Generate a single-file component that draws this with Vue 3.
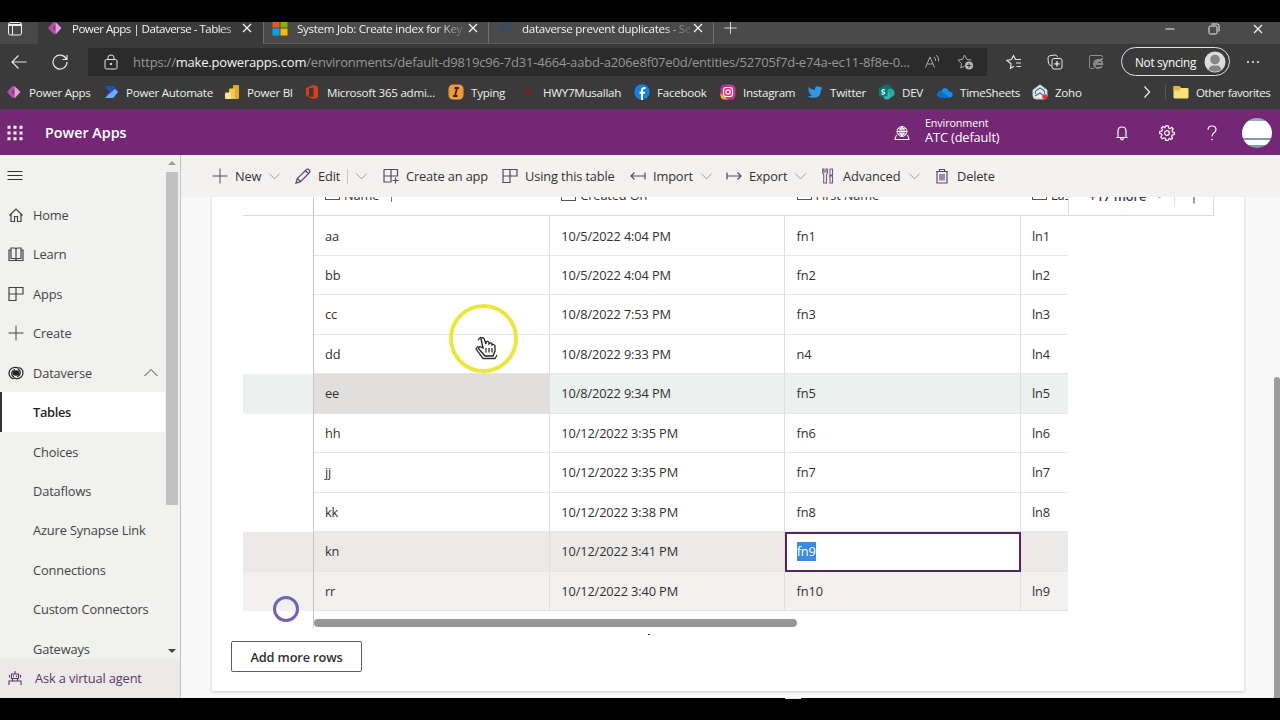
<template>
  <div class="screen">
    <!-- browser tabs -->
    <div class="tab-strip">
      <div class="tab-actions">
        <svg viewBox="0 0 16 16" class="icon" v-html="icons.tabActions"></svg>
      </div>
      <div v-for="(tab, index) in tabs" :key="tab.title" class="tab" :class="{ active: index === 0 }">
        <svg viewBox="0 0 16 16" class="icon" v-html="icons[tab.icon]"></svg>
        <span class="tab-title">{{ tab.title }}</span>
        <svg viewBox="0 0 16 16" class="icon" v-html="icons.close"></svg>
      </div>
      <svg viewBox="0 0 16 16" class="icon new-tab" v-html="icons.plus"></svg>
      <div class="window-buttons">
        <svg viewBox="0 0 16 16" class="icon" v-html="icons.minimize"></svg>
        <svg viewBox="0 0 16 16" class="icon" v-html="icons.restore"></svg>
        <svg viewBox="0 0 16 16" class="icon" v-html="icons.close"></svg>
      </div>
    </div>

    <!-- address bar -->
    <div class="nav-bar">
      <svg viewBox="0 0 16 16" class="icon nav-icon back" v-html="icons.back"></svg>
      <svg viewBox="0 0 16 16" class="icon nav-icon refresh" v-html="icons.refresh"></svg>
      <div class="url-bar">
        <svg viewBox="0 0 16 16" class="icon lock" v-html="icons.lock"></svg>
        <span class="url">https://<b>make.powerapps.com</b>/environments/default-d9819c96-7d31-4664-aabd-a206e8f07e0d/entities/52705f7d-e74a-ec11-8f8e-0...</span>
        <svg viewBox="0 0 16 16" class="icon dim read" v-html="icons.readAloud"></svg>
        <svg viewBox="0 0 16 16" class="icon dim" v-html="icons.starAdd"></svg>
      </div>
      <div class="nav-tools">
        <svg viewBox="0 0 16 16" class="icon" v-html="icons.favorites"></svg>
        <svg viewBox="0 0 16 16" class="icon" v-html="icons.collections"></svg>
        <svg viewBox="0 0 16 16" class="icon faint" v-html="icons.ie"></svg>
      </div>
      <div class="profile">
        <span>Not syncing</span>
        <svg viewBox="0 0 22 22" class="profile-pic" v-html="icons.person"></svg>
      </div>
      <svg viewBox="0 0 16 16" class="icon more" v-html="icons.dots"></svg>
    </div>

    <!-- favorites bar -->
    <div class="favorites">
      <div v-for="fav in favorites" :key="fav.label" class="favorite" :style="{ width: fav.width + 'px' }">
        <svg viewBox="0 0 16 16" class="icon" v-html="icons[fav.icon]"></svg>
        <span>{{ fav.label }}</span>
      </div>
      <svg viewBox="0 0 16 16" class="icon overflow" v-html="icons.chevronRight"></svg>
      <div class="favorite other">
        <svg viewBox="0 0 16 16" class="icon" v-html="icons.folder"></svg>
        <span>Other favorites</span>
      </div>
    </div>

    <!-- Power Apps header -->
    <header class="app-header">
      <svg viewBox="0 0 16 16" class="icon" v-html="icons.waffle"></svg>
      <span class="app-title">Power Apps</span>
      <svg viewBox="0 0 16 16" class="icon env-icon" v-html="icons.environment"></svg>
      <div class="environment">
        <span class="env-label">Environment</span>
        <span class="env-name">ATC (default)</span>
      </div>
      <div class="header-icons">
        <svg viewBox="0 0 16 16" class="icon" v-html="icons.bell"></svg>
        <svg viewBox="0 0 16 16" class="icon" v-html="icons.gear"></svg>
        <svg viewBox="0 0 16 16" class="icon" v-html="icons.help"></svg>
      </div>
      <div class="avatar"></div>
    </header>

    <div class="body">
      <aside class="sidebar">
        <div class="sidebar-scroll">
          <div class="nav-list">
            <div class="hamburger">
              <svg viewBox="0 0 16 16" class="icon" v-html="icons.menu"></svg>
            </div>
            <div
              v-for="item in navItems"
              :key="item.label"
              class="nav-item"
              :class="{ selected: item.label === selectedNav }"
            >
              <svg viewBox="0 0 16 16" class="icon" v-html="item.icon ? icons[item.icon] : ''"></svg>
              <span>{{ item.label }}</span>
              <svg v-if="item.open" viewBox="0 0 16 16" class="icon expand" v-html="icons.chevronUp"></svg>
            </div>
          </div>
          <div class="scrollbar">
            <span class="arrow up"></span>
            <span class="thumb"></span>
            <span class="arrow down"></span>
          </div>
        </div>
        <div class="agent">
          <svg viewBox="0 0 16 16" class="icon" v-html="icons.bot"></svg>
          <span>Ask a virtual agent</span>
        </div>
      </aside>

      <main class="main">
        <div class="commands">
          <div v-for="cmd in commands" :key="cmd.label" class="command" :style="{ width: cmd.width + 'px' }">
            <svg viewBox="0 0 16 16" class="icon" v-html="icons[cmd.icon]"></svg>
            <span :style="{ width: cmd.textWidth + 'px' }">{{ cmd.label }}</span>
            <i v-if="cmd.split" class="split"></i>
            <svg v-if="cmd.menu" viewBox="0 0 16 16" class="icon chevron" v-html="icons.chevronDown"></svg>
          </div>
        </div>

        <section class="card">
          <div class="grid-area">
            <div class="grid">
              <div class="row head">
                <div class="gutter"></div>
                <div class="cell"><i class="field"></i>Name<b class="sort"></b></div>
                <div class="cell"><i class="field date"></i>Created On</div>
                <div class="cell"><i class="field"></i>First Name</div>
                <div class="cell last"><i class="field"></i>Las</div>
              </div>
              <div v-for="row in rows" :key="row.name" class="row" :class="row.state">
                <div class="gutter"></div>
                <div class="cell">{{ row.name }}</div>
                <div class="cell">{{ row.created }}</div>
                <div class="cell" :class="{ editing: row.editing }">
                  <span>{{ row.first }}</span>
                </div>
                <div class="cell last">{{ row.last }}</div>
              </div>
              <div class="grid-foot"><span class="h-thumb"></span></div>
            </div>
            <div class="more-columns">
              <span>+17 more</span>
              <svg viewBox="0 0 16 16" class="icon small" v-html="icons.chevronDown"></svg>
              <i class="divider"></i>
              <svg viewBox="0 0 16 16" class="icon add" v-html="icons.plus"></svg>
            </div>
          </div>
          <button class="add-rows">Add more rows</button>
        </section>

        <span class="page-thumb"></span>
      </main>
    </div>

    <!-- pointer, click ring and stray marks lie over the page -->
    <span class="spotlight"></span>
    <svg class="pointer" viewBox="0 0 24 28">
      <path d="M6 3 L3 6 M3 12 L1 15 L8 24.500 H20 L22 21" fill="none" stroke="#333" stroke-width="1.300" />
      <path
        d="M8 14 L6 5 Q7 2.500 9 4.500 L11 10 V8 Q13 6.500 14 8.500 V10 Q16 8 17 9.500 V11 Q19 9.500 20 12 L20 17 L18 22 H10 L3.500 14.500 Q4 12 6 13 Z"
        fill="#fff"
        stroke="#222"
        stroke-width="1.300"
      />
      <path d="M11 14 V18.500 M14 14 V18.500 M17 14 V18.500" stroke="#222" stroke-width="1.200" />
    </svg>
    <span class="busy-ring"></span>
    <span class="speck"></span>
    <span class="edge-mark"></span>
  </div>
</template>

<script setup>
import { ref } from 'vue'

const selectedNav = ref('Tables')

const tabs = [
  { title: 'Power Apps | Dataverse - Tables', icon: 'powerApps' },
  { title: 'System Job: Create index for Key', icon: 'microsoft' },
  { title: 'dataverse prevent duplicates - Se', icon: 'search' },
]

const favorites = [
  { label: 'Power Apps', icon: 'powerApps', width: 97 },
  { label: 'Power Automate', icon: 'automate', width: 121 },
  { label: 'Power BI', icon: 'powerBi', width: 80 },
  { label: 'Microsoft 365 admi...', icon: 'office', width: 144 },
  { label: 'Typing', icon: 'typing', width: 72 },
  { label: 'HWY7Musallah', icon: 'musallah', width: 114 },
  { label: 'Facebook', icon: 'facebook', width: 86 },
  { label: 'Instagram', icon: 'instagram', width: 87 },
  { label: 'Twitter', icon: 'twitter', width: 72 },
  { label: 'DEV', icon: 'sharepoint', width: 58 },
  { label: 'TimeSheets', icon: 'onedrive', width: 95 },
  { label: 'Zoho', icon: 'zoho', width: 106 },
]

const navItems = [
  { label: 'Home', icon: 'home' },
  { label: 'Learn', icon: 'book' },
  { label: 'Apps', icon: 'apps' },
  { label: 'Create', icon: 'plus' },
  { label: 'Dataverse', icon: 'dataverse', open: true },
  { label: 'Tables' },
  { label: 'Choices' },
  { label: 'Dataflows' },
  { label: 'Azure Synapse Link' },
  { label: 'Connections' },
  { label: 'Custom Connectors' },
  { label: 'Gateways' },
]

const commands = [
  { label: 'New', icon: 'plus', width: 83, textWidth: 26, menu: true },
  { label: 'Edit', icon: 'pencil', width: 88, textWidth: 22, split: true, menu: true },
  { label: 'Create an app', icon: 'appsAdd', width: 119, textWidth: 82 },
  { label: 'Using this table', icon: 'apps', width: 128, textWidth: 91 },
  { label: 'Import', icon: 'importArrow', width: 96, textWidth: 40, menu: true },
  { label: 'Export', icon: 'exportArrow', width: 94, textWidth: 38, menu: true },
  { label: 'Advanced', icon: 'tools', width: 114, textWidth: 58, menu: true },
  { label: 'Delete', icon: 'trash', width: 70, textWidth: 40 },
]

const rows = [
  { name: 'aa', created: '10/5/2022 4:04 PM', first: 'fn1', last: 'ln1' },
  { name: 'bb', created: '10/5/2022 4:04 PM', first: 'fn2', last: 'ln2' },
  { name: 'cc', created: '10/8/2022 7:53 PM', first: 'fn3', last: 'ln3' },
  { name: 'dd', created: '10/8/2022 9:33 PM', first: 'n4', last: 'ln4' },
  { name: 'ee', created: '10/8/2022 9:34 PM', first: 'fn5', last: 'ln5', state: 'hovered' },
  { name: 'hh', created: '10/12/2022 3:35 PM', first: 'fn6', last: 'ln6' },
  { name: 'jj', created: '10/12/2022 3:35 PM', first: 'fn7', last: 'ln7' },
  { name: 'kk', created: '10/12/2022 3:38 PM', first: 'fn8', last: 'ln8' },
  { name: 'kn', created: '10/12/2022 3:41 PM', first: 'fn9', last: '', state: 'current', editing: true },
  { name: 'rr', created: '10/12/2022 3:40 PM', first: 'fn10', last: 'ln9', state: 'pending' },
]

// 16x16 icon bodies, strokes take the text color unless set here
const icons = {
  tabActions: '<rect x="1.500" y="1.500" width="13" height="12.500" rx="2"/><path d="M2 4H14" stroke-width="2"/><path d="M5.500 5V14"/>',
  close: '<path d="M4 4L12 12M12 4L4 12" stroke-width="1.300"/>',
  plus: '<path d="M8 0.500V15.500M0.500 8H15.500"/>',
  minimize: '<path d="M3.500 8H12.500"/>',
  restore: '<rect x="3" y="5" width="8" height="8" rx="1.500"/><path d="M5.500 3H11.500Q13 3 13 4.500V10.500"/>',
  back: '<path d="M15.500 8H1M7.500 1.500L1 8L7.500 14.500" stroke-width="1.200"/>',
  refresh: '<path d="M14.300 5A7 7 0 1 0 15 8M15 1V5.500H10.500" stroke-width="1.200"/>',
  lock: '<rect x="2" y="5.500" width="12" height="9.500" rx="1.500"/><path d="M5 5.500V3.500Q5 1 8 1Q11 1 11 3.500V5.500"/><circle cx="8" cy="10" r=".8" fill="currentColor"/>',
  readAloud: '<path d="M1.500 13.500L6 3L10.500 13.500M3.200 10H8.800M10 3Q12 4.500 11.500 7M12 1Q15.500 3.500 14.500 7.500"/>',
  starAdd: '<path d="M7.500 12L3.800 14L4.500 9.500L1 6L5.500 5.500L7.500 1L10 5.500L14.500 6"/><circle cx="12" cy="11.500" r="4" fill="#b8b8b8" stroke="none"/><path d="M12 9.300V13.700M9.800 11.500H14.200" stroke="#333"/>',
  favorites: '<path d="M8 12.300L4.500 14.200L5 9.800L1 6.500L5.500 5.500L7.500 1.500L9.500 5.500H15M10 9H15M10.500 12.500H15" stroke-width="1.200"/>',
  collections: '<path d="M4.500 12Q1.500 11 1.300 8L1 4Q1 2 3 1.700L8 1Q10 1 10.500 3"/><rect x="5" y="4.500" width="10" height="10.500" rx="2"/><path d="M10 7V12.500M7.300 9.800H12.700" stroke-width="1.300"/>',
  ie: '<path d="M6 14.500H3Q1.500 14.500 1.500 13V3Q1.500 1.500 3 1.500H13Q14.500 1.500 14.500 3"/><path d="M6 10H14.300Q14 6 10.300 6Q6 6.300 6 10Q6.500 14 10 14Q13 14 14 12M6 13Q8 7 15 4.500" stroke-width="1.800"/>',
  person: '<circle cx="11" cy="11" r="10.500" fill="#dcdcdc" stroke="none"/><circle cx="11" cy="8.500" r="4.800" fill="#858585" stroke="none"/><path d="M4.500 18.500Q6 14.500 9 14.500H13Q16 14.500 17.500 18.500Q11 23 4.500 18.500Z" fill="#858585" stroke="none"/>',
  dots: '<circle cx="3" cy="8" r="1.100" fill="currentColor" stroke="none"/><circle cx="8" cy="8" r="1.100" fill="currentColor" stroke="none"/><circle cx="13" cy="8" r="1.100" fill="currentColor" stroke="none"/>',
  chevronRight: '<path d="M5.500 2.500L10.500 8L5.500 13.500" stroke-width="1.200"/>',
  chevronUp: '<path d="M1.500 11L8 4.500L14.500 11"/>',
  chevronDown: '<path d="M1.500 5L8 11.500L14.500 5"/>',
  folder: '<path d="M.5 3Q.5 2 1.500 2H6L8 4H14.500Q15.500 4 15.500 5V13Q15.500 14.500 14 14.500H2Q.5 14.500 .5 13Z" fill="#f8e07c" stroke="none"/><path d="M.5 3Q.5 2 1.500 2H6L8 4L6 6.500H.5Z" fill="#e2b53c" stroke="none"/>',
  powerApps: '<path d="M7 1.500L1 8L7 14.500L12 8Z" fill="#b64fa4" stroke="none"/><path d="M8.500 2L14.500 8L8.500 14.500L8.500 11L5.500 8L8.500 5Z" fill="#e59edb" stroke="none"/><path d="M5.500 8L8.500 4.500V11.500Z" fill="#8d2c80" stroke="none"/>',
  automate: '<path d="M2 2H10L15 8L10 14H2L7 8Z" fill="#3b7fee" stroke="none"/><path d="M2 2H10L12.500 5L5.500 10L7 8Z" fill="#1553c0" stroke="none"/><path d="M2 14L12 5L15 8L10 14Z" fill="#71a8fc" stroke="none"/>',
  powerBi: '<rect x="9" y="1" width="6" height="14" rx="1" fill="#e3ad22" stroke="none"/><rect x="5" y="4.500" width="6" height="10.500" rx="1" fill="#f4ca4c" stroke="none"/><rect x="1" y="8.500" width="6" height="6.500" rx="1" fill="#fbe398" stroke="none"/>',
  office: '<path d="M2 4L9.500 1L14 2.500V13.500L9.500 15L2 12.200L9.500 13V3.500L5 4.500V11L2 12.200Z" fill="#dc3e15" stroke="none"/>',
  typing: '<rect x=".5" y="0.500" width="15" height="15" rx="4.500" fill="#f2993a" stroke="none"/><path d="M6.500 4H11M5 12H9.500M9 4L7 12" stroke="#3c2413" stroke-width="1.800"/>',
  musallah: '<path d="M8 3.500L12.500 8L8 13L3 8.500Z" fill="#6b2529" stroke="none"/>',
  facebook: '<circle cx="8" cy="8" r="7.700" fill="#1680e4" stroke="none"/><path d="M8 16V6.500Q8 4 10.500 4H11.500M5.500 8.700H11" stroke="#fff" stroke-width="2"/>',
  instagram: '<rect x=".5" y=".5" width="15" height="15" rx="4.500" fill="#d92f7f" stroke="none"/><path d="M.5 9L8 15.500H5Q.5 15.500 .5 11Z" fill="#fba53b" stroke="none"/><path d="M5 .5Q.5 .5 .5 5L5 2L11 .5Z" fill="#7b3ec9" stroke="none"/><rect x="3.500" y="3.500" width="9" height="9" rx="2.500" stroke="#fff" stroke-width="1.200"/><circle cx="8" cy="8" r="2.200" stroke="#fff" stroke-width="1.200"/><circle cx="11" cy="5" r=".6" fill="#fff" stroke="none"/>',
  twitter: '<path d="M1.500 3Q4.500 6 8 6Q7.500 2.500 10.700 2.300Q12 2.300 13 3.200L15 2.500L14.300 4.500L15.500 4.500L14 6Q14 13.500 6.500 13.700Q3 13.700 .8 12.200Q3.500 12.200 5 11.200Q2.700 10.800 2.300 9.200H3.500Q1.200 8.200 1.200 6L2.500 6.300Q.8 4.800 1.500 3Z" fill="#2f97e6" stroke="none"/>',
  sharepoint: '<circle cx="8" cy="6" r="5.500" fill="#0a6d6f" stroke="none"/><circle cx="11.500" cy="9" r="4.200" fill="#27a8a2" stroke="none"/><circle cx="8" cy="12" r="3.500" fill="#3bbbae" stroke="none"/><rect x="0" y="3.500" width="8.500" height="9" rx="1" fill="#047c7c" stroke="none"/><path d="M6 6Q3 5 3 7Q3 8 4.300 8Q5.800 8.300 5.500 9.300Q4.500 10.700 2.500 9.800" stroke="#fff" stroke-width="1.200"/>',
  onedrive: '<path d="M3.500 13.500Q.3 13 .4 10Q1 7 4 7Q6 3 9.500 4.500Q12 5.500 12 7.500Q15.700 7.500 15.700 10.500Q15.500 13.500 12.500 13.500Z" fill="#1590e8" stroke="none"/><path d="M3.500 13.500Q.3 13 .4 10Q1 7 4 7L13 13.400Z" fill="#0870c8" stroke="none"/>',
  zoho: '<path d="M1 6L8 .8L15 6V12Q15 15 12 15H4Q1 15 1 12Z" fill="#e8edef" stroke="#b8c4ca"/><path d="M3.500 7L8 4L12.500 7V10M3.500 7V10M3 12L8 9L12 12" stroke="#3e6f91" stroke-width="1.100"/><circle cx="12.800" cy="12.800" r="2.500" fill="#dd3636" stroke="none"/>',
  microsoft: '<path d="M.5 .5H7.500V7.500H.5Z" fill="#f25022" stroke="none"/><path d="M8.500 .5H15.500V7.500H8.500Z" fill="#7fba00" stroke="none"/><path d="M.5 8.500H7.500V15.500H.5Z" fill="#00a4ef" stroke="none"/><path d="M8.500 8.500H15.500V15.500H8.500Z" fill="#ffb900" stroke="none"/>',
  search: '<circle cx="8.500" cy="7" r="4" stroke="#23507c" stroke-width="1.500"/><path d="M5.500 10L2.500 13" stroke="#23507c" stroke-width="1.800"/>',
  waffle: '<path d="M.5 2.200H15.500M.5 8H15.500M.5 13.800H15.500" stroke-width="3" stroke-dasharray="3 3"/>',
  environment: '<circle cx="8" cy="6.500" r="5"/><path d="M3 6.500H13M4 3.800H12M4 9H12M8 1.500V11.500M8 1.500Q3.500 6.500 8 11.500Q12.500 6.500 8 1.500M2.500 10L.8 14.500H15.200L13.500 10"/>',
  bell: '<path d="M2.500 12.500H13.500M4 12.500V6Q4 2 8 2Q12 2 12 6V12.500M6.500 13Q7 15 8 15Q9 15 9.500 13" stroke-width="1.200"/>',
  gear: '<path d="M6.800 .8H9.200L9.700 3L11 3.500L12.800 2.300L14.200 4L13 5.700L13.400 7L15.300 7.400V9.500L13.200 10L12.500 11.300L13.700 13.200L12 14.500L10.200 13.300L9.200 15.300H6.800L6.200 13.300L5 12.800L3.200 13.800L1.800 12L3 10.200L2.600 9L.7 8.500V6.500L2.800 6L3.500 4.700L2.300 3L4 1.600L5.800 2.800Z" stroke-width="1.200"/><circle cx="8" cy="8" r="2.300" stroke-width="1.200"/>',
  help: '<path d="M4 4.800Q4 1 8 1Q12 1 12 4.500Q12 6.200 10 7.700Q8 9 8 11.500" stroke-width="1.200"/><circle cx="8" cy="14.500" r=".8" fill="currentColor" stroke="none"/>',
  menu: '<path d="M.5 3.500H15.500M.5 7.500H15.500M.5 11.500H15.500"/>',
  home: '<path d="M1.500 8.500L8 2L14.500 8.500M3 7V14.500H6.500V9.500H9.500V14.500H13V7" stroke-width="1.200"/>',
  book: '<path d="M3 2H7L8 3L9 2H13V12.500H9L8 13.500L7 12.500H3ZM8 3V13M3 4H1V14.500H15V4H13" stroke-width="1.200"/>',
  apps: '<path d="M1 1.500H8V14.500H1ZM1 8H8M8 1.500H15V8H8" stroke-width="1.200"/>',
  appsAdd: '<path d="M1 1.500H14.500V8.500M1 1.500V14H8.500M1 8H14.500M8 1.500V14M12.500 9.500V15.500M9.500 12.500H15.500" stroke-width="1.200"/>',
  dataverse: '<path d="M5.500 13.800Q1 12.500 1 8Q1.500 3 6.500 2.500Q9 2.200 10.500 3.500M10.500 2.500Q15 3.500 15 8Q14.500 13 9.500 13.600Q7 13.800 5.500 12.500M6 12Q3.300 10.500 3.800 7.500Q4.500 5 7 4.500M10 4.200Q12.700 5.500 12.200 8.500Q11.500 11 9 11.600" stroke="#222" stroke-width="1.200"/><ellipse cx="8" cy="8" rx="3.400" ry="2.800" fill="#222" stroke="none"/>',
  pencil: '<path d="M1 15L2.300 10.500L11.500 1.500Q12.700 .5 14 1.800Q15.500 3.200 14.500 4.500L5.500 13.700ZM10.500 2.700L13.500 5.500M2.500 10.500L5.500 13.500" stroke-width="1.200"/>',
  importArrow: '<path d="M1 8H15M4.500 4.500L1 8L4.500 11.500M15 4.500V11.500" stroke-width="1.200"/>',
  exportArrow: '<path d="M1 8H15M11.500 4.500L15 8L11.500 11.500M1 4.500V11.500" stroke-width="1.200"/>',
  tools: '<path d="M4 1V4H6V1H7.500V5L6.500 6.500V15H3.700V6.500L2.700 5V1ZM10 1H12.500V7H10ZM9 8H13M10 8V15H12.500V8" stroke="#725b80" stroke-width="1.100"/>',
  trash: '<path d="M2 3.500H14M5.500 3.500V1.500H10.500V3.500M3 3.500V15H13V3.500M6 6V12.500M8 6V12.500M10 6V12.500" stroke="#60476d" stroke-width="1.200"/>',
  bot: '<path d="M8 1V4M4.500 4H11.500V8.500H4.500ZM2.500 5V7.500M13.500 5V7.500M2 15V11H14V15M5.500 11V8.500M10.500 11V8.500" stroke-width="1.100"/><path d="M6 6.300H7M9 6.300H10" stroke-width="1.500"/>',
}
</script>

<style>
body {
  margin: 0;
  background: #000;
}
</style>

<style scoped>
.screen {
  position: relative;
  width: 1280px;
  height: 720px;
  padding: 22px 0;
  box-sizing: border-box;
  overflow: hidden;
  display: flex;
  flex-direction: column;
  background: #000;
  font-family: 'Segoe UI', 'Open Sans', 'Noto Sans', sans-serif;
  font-size: 12.8px;
  letter-spacing: -0.13px;
  color: #323130;
  white-space: nowrap;
}

.screen * {
  box-sizing: border-box;
}

.icon {
  width: 16px;
  height: 16px;
  flex: none;
  fill: none;
  stroke: currentColor;
  stroke-width: 1;
}

/* --- Browser chrome --- */
.tab-strip {
  display: flex;
  flex: none;
  height: 22px;
  overflow: hidden;
  background: #4a4a4a;
  color: #f2f2f2;
  font-size: 11.6px;
  letter-spacing: -0.3px;
}

.tab-actions {
  display: flex;
  width: 38px;
  padding: 0 0 9px 7px;
  align-items: center;
  background: #484848;
}

.tab {
  display: flex;
  align-items: center;
  width: 225px;
  padding: 0 7px 9px 8px;
  border-right: 1px solid #707070;
  border-bottom: 1px solid #5c5c5c;
}

.tab.active {
  width: 226px;
  padding: 0 8px 9px 9px;
  border-bottom-color: #3a3a3a;
  background: #3a3a3a;
}

.tab-title {
  flex: 1;
  min-width: 0;
  margin-left: 9px;
  mask-image: linear-gradient(to right, #000 84%, rgba(0, 0, 0, 0.2) 98%);
}

.active .tab-title {
  letter-spacing: -0.54px;
  mask-image: linear-gradient(to right, #000 88%, rgba(0, 0, 0, 0.6) 96%);
}

.new-tab {
  width: 13px;
  margin: -2px 0 0 10px;
}

.window-buttons {
  display: flex;
  gap: 28px;
  margin-left: auto;
  padding-right: 14px;
  align-items: center;
  padding-bottom: 9px;
}

.nav-bar {
  display: flex;
  flex: none;
  align-items: center;
  height: 35px;
  padding-left: 11px;
  background: #3a3a3a;
  color: #e6e6e6;
}

.nav-icon.refresh {
  margin-left: 25px;
}

.url-bar {
  display: flex;
  align-items: center;
  width: 899px;
  height: 28px;
  margin-left: 20px;
  padding: 0 14px 0 15px;
  background: #2b2b2b;
}

.lock {
  margin-right: 14px;
}

.url {
  flex: 1;
  color: #979797;
  font-size: 13px;
  letter-spacing: -0.2px;
}

.url b {
  color: #f5f5f5;
  font-weight: 400;
}

.dim {
  color: #aaa;
}

.read {
  margin-right: 17px;
}

.faint {
  color: #8c8c8c;
}

.nav-tools {
  display: flex;
  gap: 25px;
  margin-left: 19px;
}

.profile {
  display: flex;
  align-items: center;
  justify-content: space-between;
  width: 109px;
  height: 29px;
  margin-left: 17px;
  padding: 0 3px 0 13px;
  border: 1px solid #e0e0e0;
  border-radius: 15px;
  color: #fff;
  font-size: 11.8px;
  letter-spacing: -0.3px;
}

.profile-pic {
  width: 22px;
  height: 22px;
  fill: none;
}

.more {
  margin-left: 15px;
}

.favorites {
  display: flex;
  flex: none;
  align-items: center;
  height: 31px;
  padding: 0 0 4px 6px;
  border-bottom: 1px solid #5b355e;
  background: #3a3a3a;
  color: #f0f0f0;
  font-size: 11.6px;
  letter-spacing: -0.26px;
}

.favorite {
  display: flex;
  flex: none;
  align-items: center;
  gap: 7px;
}

.overflow {
  margin-left: 1px;
}

.other {
  margin-left: 10px;
  padding-left: 7px;
  border-left: 1px solid #555;
  gap: 7px;
  letter-spacing: -0.48px;
}

/* --- App header --- */
.app-header {
  display: flex;
  flex: none;
  align-items: center;
  height: 45px;
  padding-left: 7px;
  background: #742774;
  color: #fff;
}

.app-title {
  width: 849px;
  margin-left: 22px;
  font-size: 14.3px;
  font-weight: 600;
  letter-spacing: 0;
}

.environment {
  display: flex;
  flex-direction: column;
  width: 175px;
  margin-left: 15px;
  padding-bottom: 6px;
}

.env-label {
  font-size: 10.8px;
  line-height: 15px;
}

.env-name {
  font-size: 12.8px;
  line-height: 15px;
}

.header-icons {
  display: flex;
  gap: 29px;
  margin-left: 14px;
}

.avatar {
  width: 30px;
  height: 30px;
  margin-left: 22px;
  border-radius: 50%;
  background: linear-gradient(
    #9aa9c2 0 3px,
    #fff 3px 20px,
    #7e9cb0 20px 22px,
    #fff 22px 27px,
    #7e9cb0 27px
  );
}

/* --- Sidebar --- */
.body {
  display: flex;
  flex: 1;
  min-height: 0;
  background: #f8f8f8;
}

.sidebar {
  display: flex;
  flex-direction: column;
  width: 181px;
  border-right: 1px solid #c4c2c4;
  background: #f1f1ef;
}

.sidebar-scroll {
  display: flex;
  height: 504px;
}

.nav-list {
  width: 166px;
  overflow: hidden;
}

.hamburger {
  height: 40px;
  padding: 13px 7px;
}

.nav-item {
  display: flex;
  align-items: center;
  width: 165px;
  height: 39.47px;
  padding-left: 8px;
  color: #444;
}

.nav-item span {
  margin-left: 9px;
}

.nav-item.selected {
  padding-left: 6px;
  border-left: 2px solid #333;
  background: #fff;
  color: #252423;
  font-weight: 600;
  letter-spacing: -0.3px;
}

.expand {
  margin: 0 6px 0 auto;
}

.scrollbar {
  display: flex;
  flex-direction: column;
  align-items: center;
  width: 12px;
  padding: 6px 0 6px;
}

.arrow {
  border: 4px solid transparent;
}

.arrow.up {
  border-top: 0;
  border-bottom-color: #999;
  margin-bottom: 7px;
}

.arrow.down {
  border-top-color: #444;
  border-bottom: 0;
  margin-top: auto;
}

.thumb {
  width: 12px;
  height: 333px;
  background: #c1c1c1;
}

.agent {
  display: flex;
  align-items: center;
  gap: 12px;
  height: 39px;
  padding: 0 0 1px 7px;
  background: #eceae9;
  color: #5c3564;
}

/* --- Main --- */
.main {
  position: relative;
  display: flex;
  flex: 1;
  flex-direction: column;
}

.commands {
  display: flex;
  height: 42px;
  padding-left: 31px;
  align-items: center;
  background: #f3f2f1;
}

.command {
  display: flex;
  align-items: center;
}

.command > .icon:first-child {
  color: #59485f;
}

.command span {
  margin-left: 7px;
}

.command .chevron {
  width: 13px;
  margin-left: 7px;
  color: #8a8886;
}

.split {
  width: 1px;
  height: 15px;
  margin-left: 7px;
  background: #c8c6c4;
}

.card {
  width: 1032px;
  height: 494px;
  margin-left: 31px;
  padding-left: 19px;
  background: #fff;
  box-shadow: 0 1px 3px rgba(0, 0, 0, 0.2);
  clip-path: inset(0 -5px -5px -5px);
}

.grid-area {
  display: flex;
  align-items: flex-start;
  height: 444px;
  margin-left: 12px;
  overflow: hidden;
}

/* the header row is scrolled half under the command bar */
.grid {
  width: 825px;
  margin-top: -20.2px;
  overflow: hidden;
}

.row {
  display: flex;
  height: 39.47px;
}

.gutter {
  flex: none;
  width: 71px;
  border-right: 1px solid #c8c6c4;
}

.cell {
  display: flex;
  flex: none;
  align-items: center;
  width: 235.3px;
  padding-left: 11.3px;
  border-right: 1px solid #e1dfdd;
  border-bottom: 1px solid #e8e6e4;
}

.gutter + .cell {
  width: 236px;
  padding-left: 11px;
}

.cell.last {
  width: 48px;
  border-right: 0;
  overflow: hidden;
}

.head .gutter,
.head .cell {
  border-bottom: 1px solid #dcdad8;
}

.head .cell {
  padding-bottom: 3px;
  border-right: 0;
}

.field {
  flex: none;
  width: 15px;
  height: 10px;
  margin-right: 4px;
  border: 1px solid #555;
}

.field.date {
  height: 12px;
}

.sort {
  width: 1px;
  height: 14px;
  margin-left: 12px;
  background: #777;
}

.hovered .gutter,
.hovered .cell {
  background: #ecf0ef;
}

.hovered .gutter + .cell {
  background: #e1dfde;
}

.current .gutter,
.current .cell {
  background: #ebeae9;
}

.pending .gutter,
.pending .cell {
  background: #f2f1ef;
}

.cell.editing {
  padding-left: 9.4px;
  border: 2px solid #5a2462;
  background: #fff;
}

.editing span {
  background: #3b8be0;
  color: #fff;
  line-height: 19px;
}

.grid-foot {
  height: 17px;
  margin-left: 70px;
  padding-top: 8.5px;
  border-left: 1px solid #c8c6c4;
}

.h-thumb {
  display: block;
  width: 483px;
  height: 8px;
  border-radius: 4px;
  background: #979797;
}

.more-columns {
  display: flex;
  align-items: center;
  width: 146px;
  height: 39.45px;
  margin-top: -20.2px;
  padding: 0 0 1px 20px;
  border: 1px solid #dcdad8;
  color: #4a3350;
  font-weight: 600;
}

.small {
  width: 9px;
  margin-left: 9px;
}

.divider {
  width: 1px;
  height: 22px;
  margin: 0 11px 0 10px;
  background: #ddd;
}

.add-rows {
  width: 131px;
  height: 31px;
  padding: 0;
  border: 1px solid #605e5c;
  border-radius: 2px;
  background: #fff;
  color: #323130;
  font: inherit;
  font-weight: 600;
  letter-spacing: -0.15px;
}

.page-thumb {
  position: absolute;
  top: 222px;
  right: 0;
  width: 6px;
  height: 321px;
  border-radius: 3px 3px 0 0;
  background: #9d9d9b;
}

/* --- Overlays --- */
.spotlight {
  position: absolute;
  left: 449px;
  top: 304px;
  width: 69px;
  height: 69px;
  border: 4px solid #e8e83e;
  border-radius: 50%;
}

.pointer {
  position: absolute;
  left: 475px;
  top: 334px;
  width: 24px;
  height: 28px;
}

.busy-ring {
  position: absolute;
  left: 273px;
  top: 596px;
  width: 26px;
  height: 26px;
  border: 3px solid #6d64b8;
  border-radius: 50%;
}

.speck {
  position: absolute;
  left: 648px;
  top: 634px;
  width: 2px;
  height: 1px;
  background: #333;
}

.edge-mark {
  position: absolute;
  left: 785px;
  top: 698px;
  width: 16px;
  height: 1px;
  background: #ddd;
}
</style>
